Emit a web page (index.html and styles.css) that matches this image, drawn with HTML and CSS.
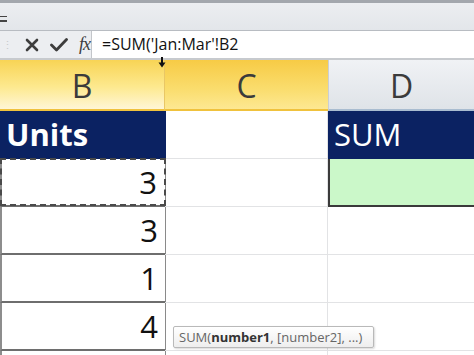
FILE: index.html
```html
<!DOCTYPE html>
<html lang="en">

<head>
    <meta charset="UTF-8">
    <meta name="viewport" content="width=device-width, initial-scale=1.0">
    <link rel="stylesheet" href="styles.css">
    <title>Sheet</title>
</head>

<body>
    <div class="ribbon">
        <span class="ribbonMark"></span>
    </div>

    <div class="formulaBar">
        <div class="fxTools">
            <span class="dots">⋮</span>
            <svg class="tool" width="14" height="14" viewBox="0 0 14 14">
                <path d="M2 2 L12 12 M12 2 L2 12" stroke="#3d3d3d" stroke-width="2.6" stroke-linecap="round" />
            </svg>
            <svg class="tool" width="18" height="14" viewBox="0 0 18 14">
                <path d="M1.5 7 L6.5 12 L16.5 1.5" fill="none" stroke="#3d3d3d" stroke-width="2.8" stroke-linecap="round" stroke-linejoin="round" />
            </svg>
            <span class="fx">fx</span>
        </div>
        <div class="formula">=SUM('Jan:Mar'!B2</div>
    </div>

    <div class="sheet">
        <div class="colHead colB">B</div>
        <div class="colHead colC">C</div>
        <div class="colHead colD">D</div>

        <div class="cell cellB head">Units</div>
        <div class="cell cellC"></div>
        <div class="cell cellD head sum">SUM</div>

        <div class="cell cellB num"><span class="marquee">3</span></div>
        <div class="cell cellC"></div>
        <div class="cell cellD green"></div>

        <div class="cell cellB num">3</div>
        <div class="cell cellC"></div>
        <div class="cell cellD"></div>

        <div class="cell cellB num">1</div>
        <div class="cell cellC"></div>
        <div class="cell cellD"></div>

        <div class="cell cellB num">4</div>
        <div class="cell cellC"></div>
        <div class="cell cellD"></div>

        <div class="cell cellB last"></div>
        <div class="cell cellC last"></div>
        <div class="cell cellD last"></div>

        <!-- column select cursor -->
        <svg class="cursor" width="8" height="11" viewBox="0 0 8 11">
            <path d="M4 0 V7" stroke="#111" stroke-width="2" />
            <path d="M0.5 5.5 L4 10.5 L7.5 5.5 Z" fill="#111" />
        </svg>

        <div class="tip">SUM(<b>number1</b>, [number2], ...)</div>
    </div>
</body>

</html>
```

FILE: styles.css
```css
body {
    margin: 0;
    width: 474px;
    height: 355px;
    overflow: hidden;
    background: #ffffff;
    font-family: "Open Sans", "Liberation Sans", sans-serif;
}

.ribbon {
    height: 27px;
    border-top: 3px solid #a3a7ad;
    border-bottom: 1px solid #b8bcc2;
    background: linear-gradient(#eceef1, #e3e6ea);
    position: relative;
}

.ribbonMark {
    position: absolute;
    left: 0;
    top: 13px;
    width: 7px;
    height: 3px;
    border-top: 1px solid #444;
    border-bottom: 2px solid #444;
}

.formulaBar {
    display: flex;
    height: 27px;
    border-bottom: 2px solid #c7cace;
    background: #eceef1;
}

.fxTools {
    width: 92px;
    display: flex;
    align-items: center;
    gap: 11px;
    padding-left: 2px;
    box-sizing: border-box;
    border-right: 1px solid #c3c6ca;
}

.dots {
    color: #c8cace;
    font-size: 11px;
    width: 12px;
}

.tool {
    display: block;
}

.fx {
    font-family: "Liberation Serif", serif;
    font-style: italic;
    font-size: 18px;
    color: #3d3d3d;
    letter-spacing: -1px;
}

.formula {
    flex: 1;
    background: #ffffff;
    padding-left: 10px;
    font-size: 16px;
    line-height: 27px;
    color: #111;
}

.sheet {
    display: grid;
    grid-template-columns: 165px 163px 146px;
    position: relative;
}

.colHead {
    height: 49px;
    border-bottom: 2px solid #f0c23d;
    text-align: center;
    font-size: 32px;
    line-height: 52px;
    color: #3b3b3b;
    box-sizing: content-box;
}

.colB {
    background: linear-gradient(#f8d455, #fde98f 55%, #fff6d6);
    border-right: 1px solid #e9c765;
}

.colC {
    background: linear-gradient(#f7cb45, #fadd6e 60%, #fde892);
}

.colD {
    background: linear-gradient(#f0f2f5, #dfe3e8);
    border-bottom-color: #a9bcd0;
    border-left: 1px solid #c9ced5;
}

.cell {
    height: 48px;
    box-sizing: border-box;
    border-bottom: 1px solid #e2e3e5;
    border-right: 1px solid #e2e3e5;
}

.cellB {
    border-left: 2px solid #8d8d8d;
    border-right: 1px solid #8a8a8a;
    border-bottom: 2px solid #6e6e6e;
    width: 166px;
}

.num {
    text-align: right;
    font-size: 31px;
    line-height: 46px;
    padding-right: 7px;
    color: #111;
}

.head {
    background: #0b2262;
    color: #ffffff;
    font-size: 31px;
    line-height: 46px;
    border-bottom: 1px solid #0b2262;
    border-right: none;
}

.cellB.head {
    font-weight: bold;
    padding-left: 6px;
    border-left: none;
}

.sum {
    padding-left: 6px;
}

.cellD {
    border-right: none;
}

.last {
    height: 5px;
    border-bottom: none;
}

.green {
    background: #cbf8c9;
    border-left: 2px solid #3a3a3a;
    border-bottom: 2px solid #3a3a3a;
}

.marquee {
    display: block;
    height: 48px;
    margin: -1px -8px -2px -2px;
    padding-right: 7px;
    border: 2px dashed #4a4a4a;
    box-sizing: border-box;
    line-height: 44px;
}

.cursor {
    position: absolute;
    left: 158px;
    top: -3px;
}

.tip {
    position: absolute;
    left: 173px;
    top: 266px;
    width: 201px;
    height: 22px;
    box-sizing: border-box;
    border: 1px solid #b9b9b9;
    border-radius: 2px;
    background: linear-gradient(#ffffff, #eeeeee);
    box-shadow: 1px 1px 2px rgba(0, 0, 0, 0.15);
    font-size: 13px;
    line-height: 20px;
    padding-left: 5px;
    color: #666;
    white-space: nowrap;
}

.tip b {
    color: #333;
}
```
